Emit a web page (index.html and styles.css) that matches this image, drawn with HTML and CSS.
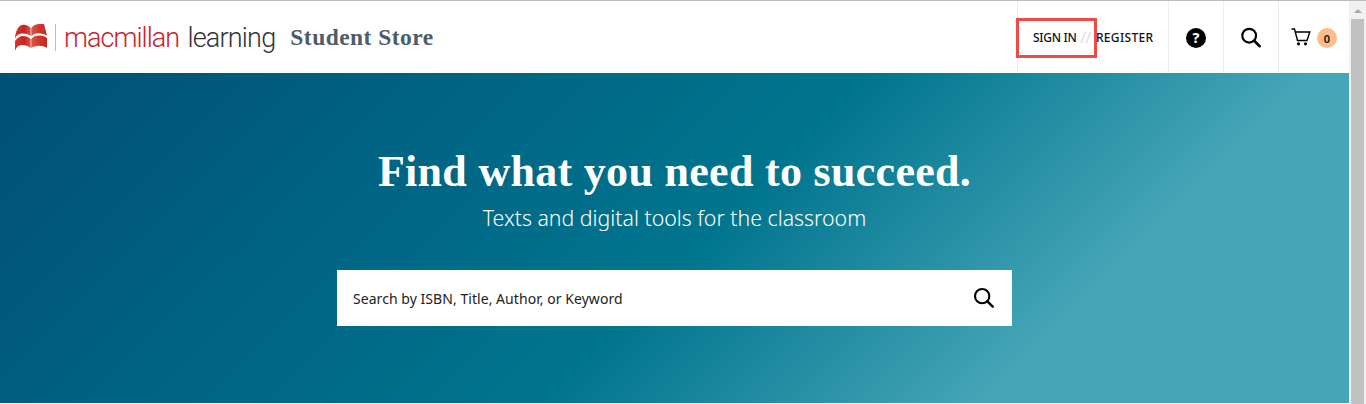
FILE: index.html
```html
<!DOCTYPE html>
<html lang="en">
<head>
<meta charset="utf-8">
<title>Macmillan Learning Student Store</title>
<link rel="stylesheet" href="styles.css">
</head>
<body>
<div class="window">
  <div class="page">
    <header class="topbar">
      <div class="brand">
        <svg class="book" viewBox="0 0 32 27" width="32" height="27" aria-hidden="true">
          <defs>
            <linearGradient id="pg" x1="0" x2="1" y1="0" y2="0">
              <stop offset="0" stop-color="#d8372c"/>
              <stop offset="0.6" stop-color="#c9241f"/>
              <stop offset="1" stop-color="#d9584c"/>
            </linearGradient>
            <linearGradient id="pr" x1="0" x2="1" y1="0" y2="0">
              <stop offset="0" stop-color="#d9584c"/>
              <stop offset="0.5" stop-color="#d0362c"/>
              <stop offset="1" stop-color="#c8281f"/>
            </linearGradient>
          </defs>
          <path fill="url(#pg)" d="M0 13 C1 7 3 2 7 1 C10 0.500 13 1 15.700 4 L15.700 12 C12 9.500 8 9 5 10 C3 10.500 1 12 0 14.500Z"/>
          <path fill="url(#pr)" d="M16.300 4 C18 1.500 21 0 25 0 L29 0 L32 11.500 C28 9.500 24 9 21 9.500 C19 10 17.500 11 16.300 12Z"/>
          <path fill="url(#pg)" d="M0 17 C2 14 5 12 8 12 C11 12 14 13 15.700 15 L15.700 24 C13 21.500 9 20.500 6 21 C3 21.500 1 24 0 27Z"/>
          <path fill="url(#pr)" d="M16.300 15 C18 12.500 21 11.500 25 11.500 C28 11.500 30 12.500 32 14 L32 24 C29 22 25 21.500 22 22 C19 22.500 17.500 23 16.300 24Z"/>
        </svg>
        <span class="rule"></span>
        <span class="wordmark"><span class="red">macmillan</span> <span class="dark">learning</span></span>
        <span class="store">Student Store</span>
      </div>
      <nav class="nav">
        <div class="cell auth"><a class="signin">SIGN IN</a><span class="slashes">//</span><a class="register">REGISTER</a></div>
        <div class="cell icon-cell"><span class="help">?</span></div>
        <div class="cell icon-cell">
          <svg class="nav-search" viewBox="0 0 24 24" width="22" height="22" aria-hidden="true"><circle cx="10" cy="9.500" r="7.500" fill="none" stroke="#000" stroke-width="2.300"/><path d="M15.500 15 L21.500 21" stroke="#000" stroke-width="2.700" stroke-linecap="round"/></svg>
        </div>
        <div class="cell cart">
          <svg viewBox="0 0 20 18" width="20" height="18" aria-hidden="true"><path d="M0.500 1 H3.500 L6.500 12.500 H16 L18.800 4 H4.500" fill="none" stroke="#000" stroke-width="1.400"/><circle cx="7.500" cy="15.800" r="1.600"/><circle cx="14.500" cy="15.800" r="1.600"/></svg>
          <span class="badge">0</span>
        </div>
      </nav>
    </header>
    <main class="hero">
      <h1>Find what you need to succeed.</h1>
      <p class="sub">Texts and digital tools for the classroom</p>
      <form class="search">
        <span class="placeholder">Search by ISBN, Title, Author, or Keyword</span>
        <svg viewBox="0 0 24 24" width="22" height="22" aria-hidden="true"><circle cx="10" cy="10" r="7.800" fill="none" stroke="#000" stroke-width="2.300"/><path d="M15.500 15.500 L21.500 21.500" stroke="#000" stroke-width="2.700" stroke-linecap="round"/></svg>
      </form>
    </main>
  </div>
  <aside class="scrollbar"><span class="arrow"></span><span class="thumb"></span></aside>
  <div class="callout"></div>
</div>
</body>
</html>
```
FILE: styles.css
```css
* { box-sizing: border-box; }
html, body { margin: 0; height: 100%; overflow: hidden; }
body { font-family: "Noto Sans", sans-serif; background: #fff; }
.window { position: relative; display: flex; width: 1366px; height: 404px; border-top: 1px solid #bbb; overflow: hidden; }
.page { width: 1349px; display: flex; flex-direction: column; padding-bottom: 1px; }

.topbar { height: 72px; display: flex; justify-content: space-between; background: #fff; }
.brand { display: flex; align-items: center; padding-left: 15px; }
.book { display: block; }
.rule { width: 1px; height: 27px; background: #bdbdbd; margin: 0 8px; }
.wordmark { font-family: Roboto, sans-serif; font-weight: 300; font-size: 27px; letter-spacing: -0.95px; word-spacing: 2.500px; white-space: nowrap; margin-top: 1px; }
.red { color: #c9202e; }
.dark { color: #333; letter-spacing: -0.8px; }
.store { font-family: "Liberation Serif", serif; font-weight: 700; font-size: 23.500px; letter-spacing: 0.45px; color: #4d5c68; margin-left: 15px; white-space: nowrap; }

.nav { display: flex; height: 71px; }
.cell { display: flex; align-items: center; border-left: 1px solid #eee; width: 55px; justify-content: center; }
.auth { width: 151px; justify-content: flex-start; padding: 2px 0 0 15px; font-size: 12px; font-weight: 500; color: #111; white-space: nowrap; }
.signin { letter-spacing: -0.3px; }
.register { letter-spacing: 0.35px; }
.slashes { color: #ccc; margin: 0 5px 0 4px; font-size: 15px; line-height: 1; font-weight: 300; }
.help { width: 20px; height: 20px; border-radius: 50%; background: #000; color: #fff; font-size: 14px; font-weight: 800; display: flex; align-items: center; justify-content: center; margin-top: 2px; }
.nav-search { margin-top: 2px; }
.cart { width: 71px; justify-content: flex-start; padding-left: 12px; gap: 6px; }
.cart svg { margin-top: 1px; }
.badge { width: 20px; height: 20px; border-radius: 50%; background: #fdbc8c; color: #111; font-size: 11px; font-weight: 600; display: flex; align-items: center; justify-content: center; margin-top: 3px; }

.hero { flex: 1; display: flex; flex-direction: column; align-items: center; background: linear-gradient(135deg, #004f78 0%, #00758e 52%, #46a5b7 78%, #46a5b7 100%); color: #fff; }
h1 { margin: 75px 0 0; font-family: "Liberation Serif", serif; font-weight: 700; font-size: 44px; line-height: 48px; letter-spacing: 0.3px; white-space: nowrap; }
.sub { margin: 8px 0 0; font-family: "Noto Sans", sans-serif; font-weight: 300; font-size: 21.300px; line-height: 28px; white-space: nowrap; }
.search { width: 675px; height: 56px; margin-top: 38px; background: #fff; display: flex; align-items: center; justify-content: space-between; padding: 0 17px 0 16px; }
.placeholder { font-size: 14px; letter-spacing: 0.05px; color: #222; white-space: nowrap; }

.scrollbar { width: 17px; background: #f1f1f1; display: flex; flex-direction: column; align-items: center; padding-top: 8px; }
.arrow { width: 0; height: 0; border-left: 4px solid transparent; border-right: 4px solid transparent; border-bottom: 4px solid #a8a8a8; }
.thumb { width: 13px; flex: 1; margin-top: 6px; background: #c1c1c1; }

.callout { position: absolute; left: 1016px; top: 17px; width: 81px; height: 40px; border: 3px solid #ef4b44; }
```
